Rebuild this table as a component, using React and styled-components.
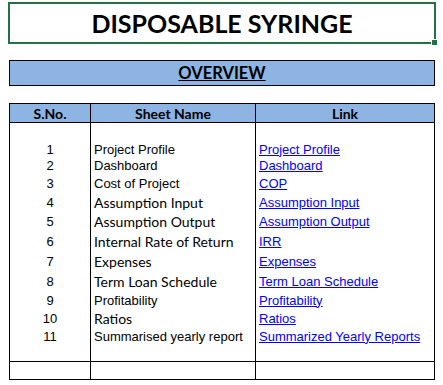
import React from "react";
import styled, { createGlobalStyle } from "styled-components";

const Global = createGlobalStyle`
  html, body { margin: 0; padding: 0; background: #fff; }
  body { font-family: "Liberation Sans", Arial, sans-serif; }
`;

const Page = styled.div`
  width: 443px;
  height: 385px;
  padding: 2px 0 0 8px;
  box-sizing: border-box;
  display: flex;
  flex-direction: column;
  align-items: flex-start;
`;

const TitleBox = styled.div`
  position: relative;
  width: 428px;
  height: 42px;
  box-sizing: border-box;
  border: 2px solid #217346;
  display: flex;
  align-items: center;
  justify-content: center;
  font-family: Lato, "Open Sans", sans-serif;
  font-weight: 700;
  font-size: 25px;
  color: #000;
`;

const Handle = styled.span`
  position: absolute;
  right: -4px;
  bottom: -4px;
  width: 5px;
  height: 5px;
  background: #217346;
  border: 1px solid #fff;
`;

const Banner = styled.div`
  margin: 16px 0 0 1px;
  width: 426px;
  height: 26px;
  box-sizing: border-box;
  border: 1px solid #000;
  background: #8db4e2;
  display: flex;
  align-items: center;
  justify-content: center;
  font-family: Lato, "Open Sans", sans-serif;
  font-weight: 700;
  font-size: 16.5px;
  text-decoration: underline;
  color: #000;
`;

const Table = styled.div`
  margin: 17px 0 0 1px;
  width: 426px;
  box-sizing: border-box;
  border: 1px solid #000;
  display: flex;
  flex-direction: column;
`;

const Row = styled.div`
  display: grid;
  grid-template-columns: 80px 165px 179px;
  height: ${(p) => p.$h}px;
  background: ${(p) => (p.$head ? "#8db4e2" : "#fff")};
  border-bottom: ${(p) => (p.$head ? "1px solid #000" : "none")};
  border-top: ${(p) => (p.$foot ? "1px solid #000" : "none")};
`;

const Cell = styled.div`
  display: flex;
  align-items: center;
  justify-content: ${(p) => (p.$center ? "center" : "flex-start")};
  padding-left: ${(p) => (p.$center ? 0 : 3)}px;
  border-left: ${(p) => (p.$first ? "none" : "1px solid #000")};
  white-space: nowrap;
  overflow: hidden;
  font-family: ${(p) =>
    p.$cal ? 'Lato, "Open Sans", sans-serif' : '"Liberation Sans", Arial, sans-serif'};
  font-size: ${(p) => (p.$cal ? 14 : 13)}px;
  font-weight: ${(p) => (p.$bold ? 700 : 400)};
  color: #000;
`;

const HeadCell = styled(Cell)`
  font-family: Lato, "Open Sans", sans-serif;
  font-weight: 700;
  font-size: 14px;
`;

const LinkText = styled.a`
  font-family: "Liberation Sans", Arial, sans-serif;
  font-size: 13px;
  color: #0000ff;
  text-decoration: underline;
`;

const rows = [
  { n: 1, name: "Project Profile", link: "Project Profile", h: 16 },
  { n: 2, name: "Dashboard", link: "Dashboard", h: 17 },
  { n: 3, name: "Cost of Project", link: "COP", h: 18 },
  { n: 4, name: "Assumption Input", link: "Assumption Input", h: 20, cal: true },
  { n: 5, name: "Assumption Output", link: "Assumption Output", h: 19, cal: true },
  { n: 6, name: "Internal Rate of Return", link: "IRR", h: 20, cal: true },
  { n: 7, name: "Expenses", link: "Expenses", h: 21, cal: true },
  { n: 8, name: "Term Loan Schedule", link: "Term Loan Schedule", h: 19, cal: true },
  { n: 9, name: "Profitability", link: "Profitability", h: 18 },
  { n: 10, name: "Ratios", link: "Ratios", h: 18, cal: true },
  { n: 11, name: "Summarised yearly report", link: "Summarized Yearly Reports", h: 18 },
];

const Empty = ({ h, foot }) => (
  <Row $h={h} $foot={foot}>
    <Cell $first />
    <Cell />
    <Cell />
  </Row>
);

export default function App() {
  return (
    <>
      <Global />
      <Page>
        <TitleBox>
          DISPOSABLE SYRINGE
          <Handle />
        </TitleBox>
        <Banner>OVERVIEW</Banner>
        <Table>
          <Row $h={18} $head>
            <HeadCell $first $center>S.No.</HeadCell>
            <HeadCell $center>Sheet Name</HeadCell>
            <HeadCell $center>Link</HeadCell>
          </Row>
          <Empty h={18} />
          {rows.map((r) => (
            <Row key={r.n} $h={r.h}>
              <Cell $first $center>{r.n}</Cell>
              <Cell $cal={r.cal}>{r.name}</Cell>
              <Cell>
                <LinkText href="#">{r.link}</LinkText>
              </Cell>
            </Row>
          ))}
          <Empty h={16} />
          <Empty h={17} foot />
        </Table>
      </Page>
    </>
  );
}
